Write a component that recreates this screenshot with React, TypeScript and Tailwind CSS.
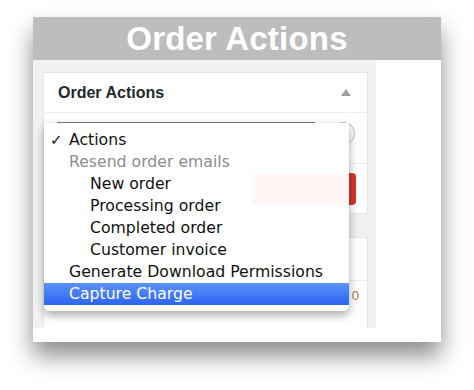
import { ChevronDown } from "lucide-react";

const items = [
  { label: "Actions", level: 0, checked: true },
  { label: "Resend order emails", level: 0, muted: true },
  { label: "New order", level: 1 },
  { label: "Processing order", level: 1 },
  { label: "Completed order", level: 1 },
  { label: "Customer invoice", level: 1 },
  { label: "Generate Download Permissions", level: 0 },
  { label: "Capture Charge", level: 0, active: true },
];

function DropdownMenu() {
  return (
    <div
      className="
        absolute
        left-[44px]
        top-[123px]
        w-[305px]
        rounded-b-[6px]
        bg-white/[0.96]
        py-[6px]
        shadow-[0_4px_10px_rgba(0,0,0,0.35)]
        font-['DejaVu_Sans',sans-serif]
        text-[15.7px]
        leading-[22px]
      "
    >
      {items.map((item) => (
        <div
          key={item.label}
          className={
            item.active
              ? "relative h-[22px] bg-gradient-to-b from-[#5c92f8] to-[#2c63f0] text-white"
              : item.muted
                ? "relative h-[22px] text-[#8c8c8c]"
                : "relative h-[22px] text-[#111]"
          }
        >
          {item.checked && (
            <span className="absolute left-[6px] top-0 text-[15px]">✓</span>
          )}
          <span
            className={
              item.level === 1
                ? "absolute left-[46px] top-0 whitespace-nowrap"
                : "absolute left-[25px] top-0 whitespace-nowrap"
            }
          >
            {item.label}
          </span>
        </div>
      ))}
    </div>
  );
}

export default function App() {
  return (
    <div className="relative h-[390px] w-[474px] overflow-hidden bg-white pl-[33px] pt-[17px] font-['Liberation_Sans',sans-serif]">
      <div className="flex h-[325px] w-[408px] flex-col bg-white shadow-[0_14px_22px_rgba(0,0,0,0.45)]">
        {/* Title bar */}
        <div className="flex h-[43px] items-center justify-center bg-[#bdbdbd]">
          <span className="text-[33px] font-bold leading-none tracking-[0.2px] text-white">
            Order Actions
          </span>
        </div>

        <div className="flex">
          {/* Gray admin area */}
          <div className="h-[268px] w-[343px] overflow-hidden bg-[#f1f1f1] pl-[10px] pr-[8px] pt-[12px]">
            {/* Order actions metabox */}
            <div className="border border-[#e5e5e5] bg-white">
              <div className="flex h-[40px] items-center justify-between border-b border-[#eee] pl-[14px] pr-[16px]">
                <span className="text-[16px] font-bold text-[#23282d]">
                  Order Actions
                </span>
                <svg width="10" height="7" viewBox="0 0 10 7">
                  <path d="M5 0 L10 7 L0 7 Z" fill="#a0a0a0" />
                </svg>
              </div>

              <div className="flex h-[51px] items-start border-b border-[#eee] pl-[13px] pr-[12px] pt-[9px]">
                <div className="flex h-[24px] w-[258px] items-center justify-end border-t border-[#777] pr-[6px]">
                  <ChevronDown size={14} className="text-[#ccc]" />
                </div>
                <div className="ml-auto h-[23px] w-[23px] rounded-full border border-[#bbb]" />
              </div>

              <div className="flex h-[49px] items-center justify-end pr-[11px]">
                <div className="h-[32px] w-[103px] rounded-[4px] bg-[#d9342b]" />
              </div>
            </div>

            {/* Next metabox */}
            <div className="mt-[23px] h-[120px] border border-[#e5e5e5] bg-white">
              <div className="h-[43px] border-b border-[#eee]" />
              <div className="flex h-[30px] items-center justify-end pr-[8px]">
                <span className="text-[13px] text-[#9a7b4f]">0</span>
              </div>
            </div>
          </div>

          {/* Right column */}
          <div className="h-[268px] flex-1 bg-white" />
        </div>
      </div>

      <DropdownMenu />
    </div>
  );
}
